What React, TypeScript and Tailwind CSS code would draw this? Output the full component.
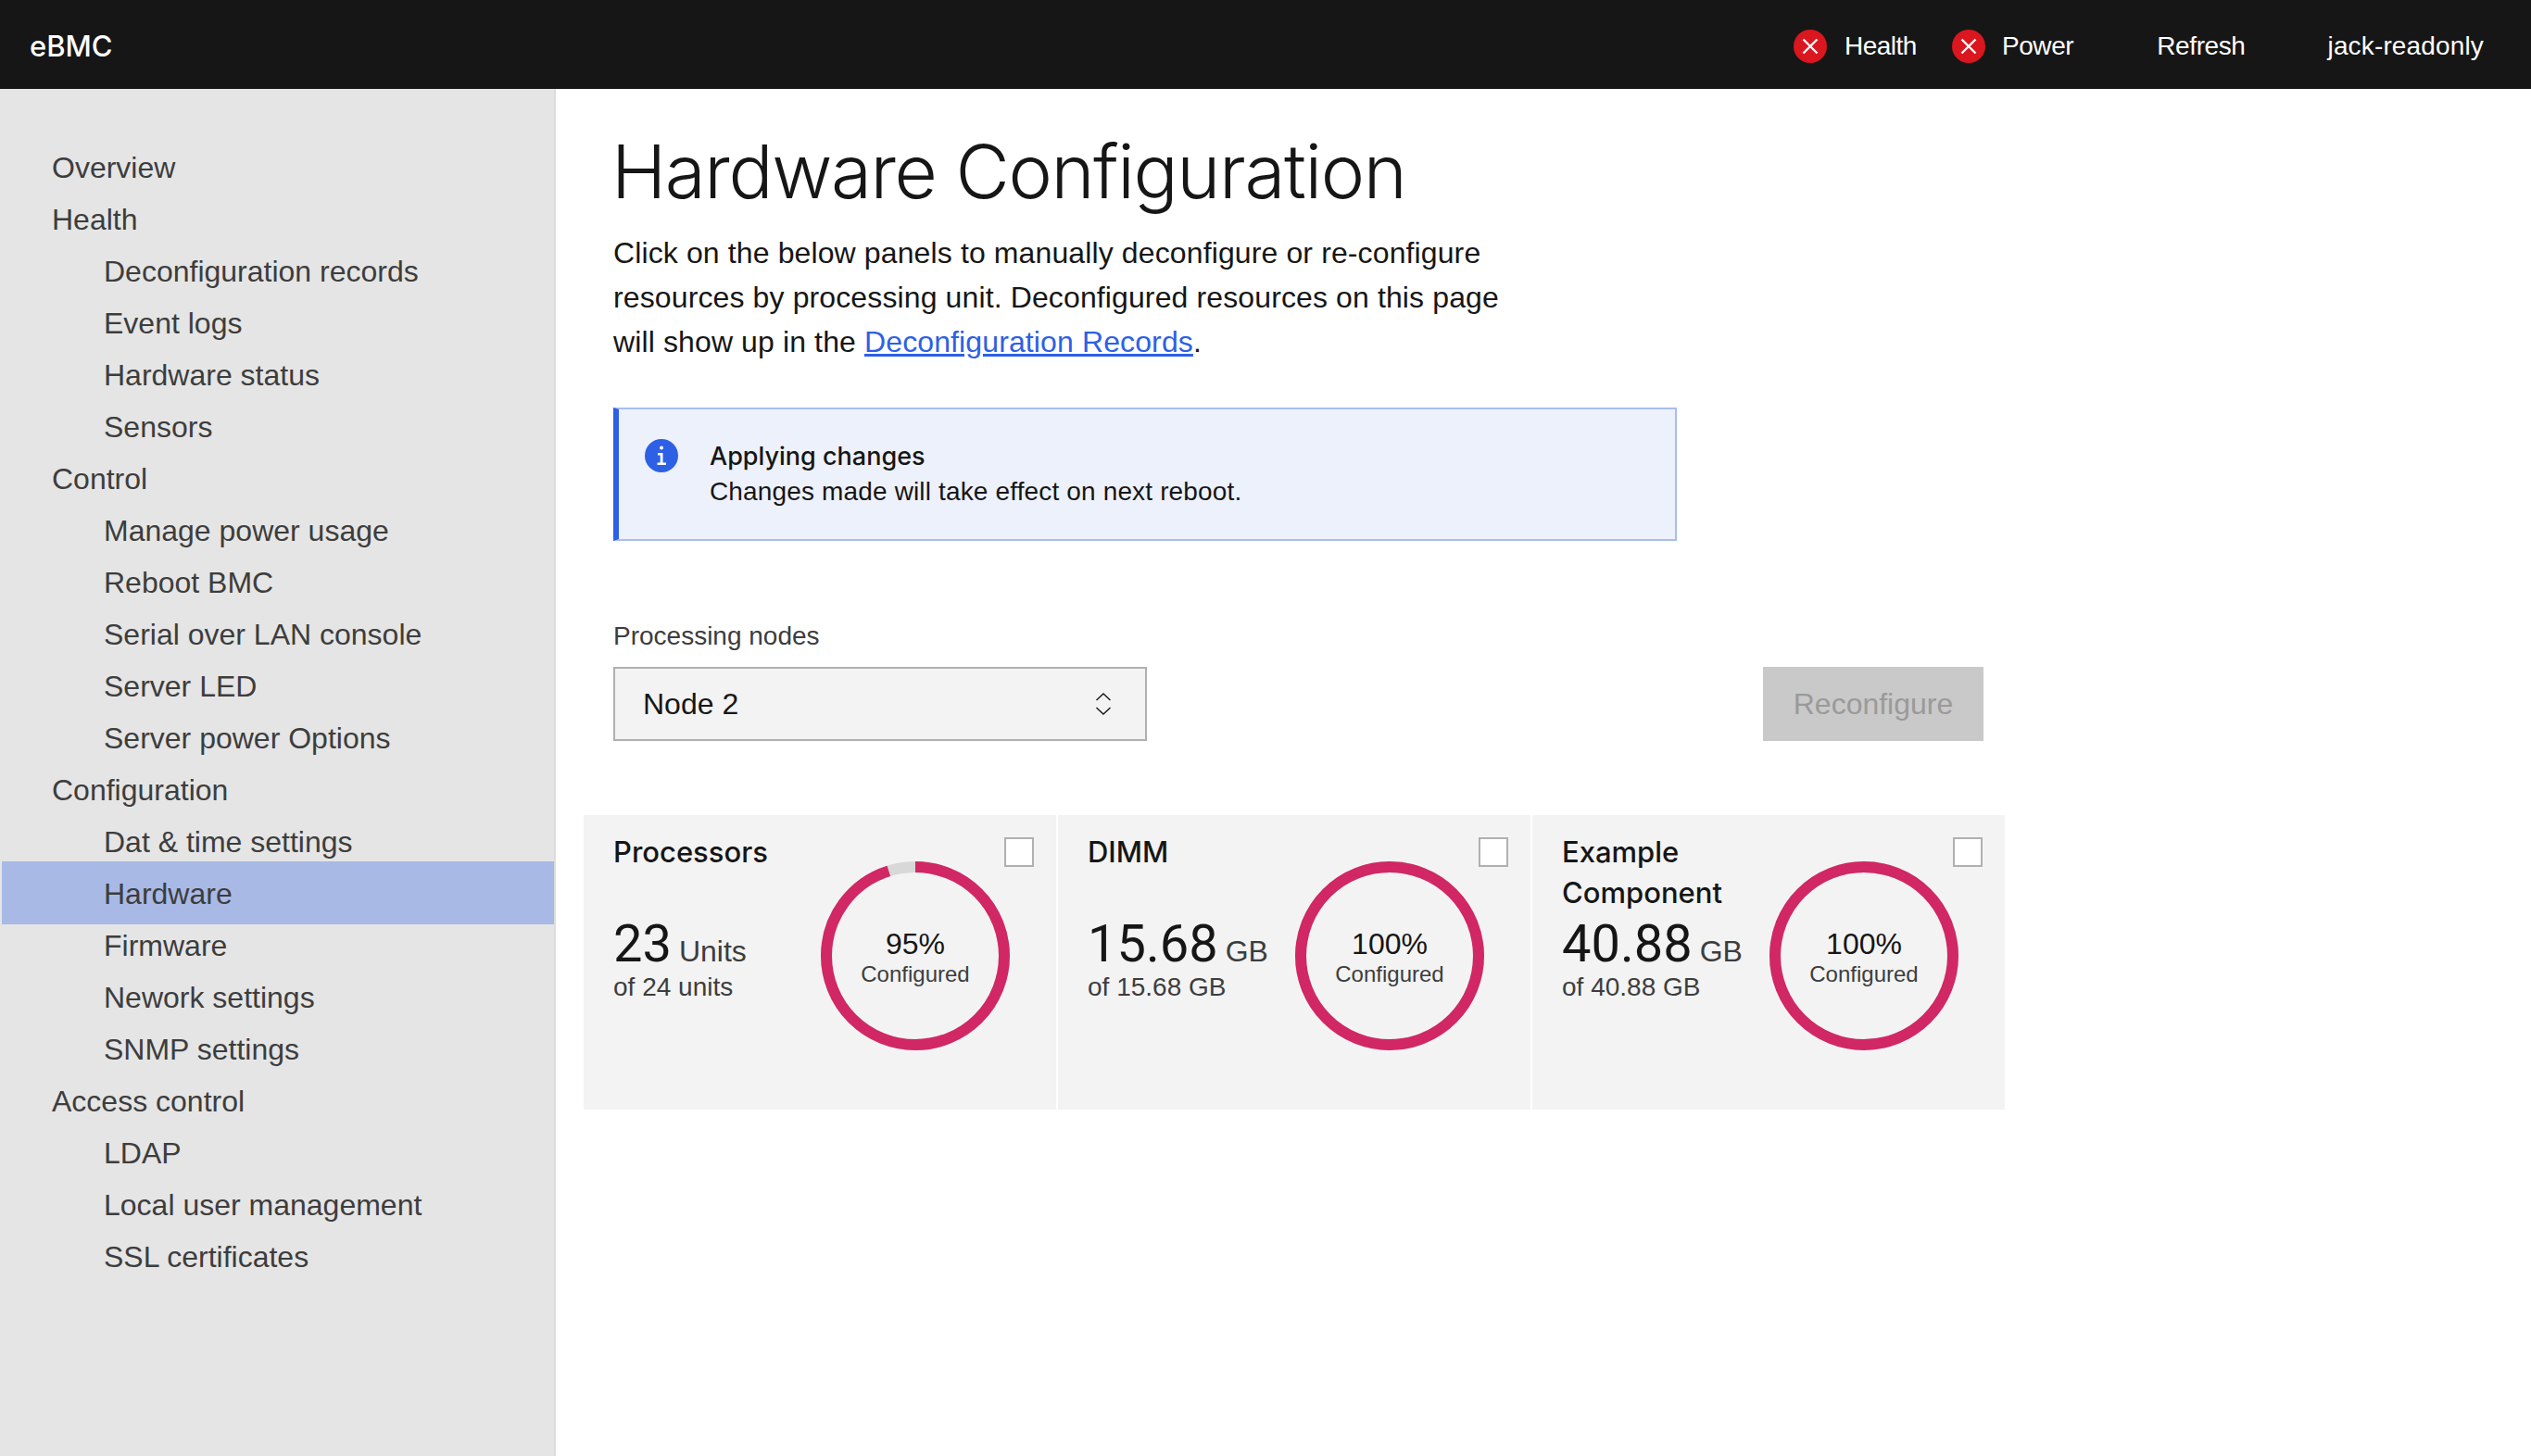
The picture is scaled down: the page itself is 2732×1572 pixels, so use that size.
import React from 'react';

const navItems = [
  { label: 'Overview' },
  { label: 'Health' },
  { label: 'Deconfiguration records', sub: true },
  { label: 'Event logs', sub: true },
  { label: 'Hardware status', sub: true },
  { label: 'Sensors', sub: true },
  { label: 'Control' },
  { label: 'Manage power usage', sub: true },
  { label: 'Reboot BMC', sub: true },
  { label: 'Serial over LAN console', sub: true },
  { label: 'Server LED', sub: true },
  { label: 'Server power Options', sub: true },
  { label: 'Configuration' },
  { label: 'Dat & time settings', sub: true },
  { label: 'Hardware', sub: true, active: true },
  { label: 'Firmware', sub: true },
  { label: 'Nework settings', sub: true },
  { label: 'SNMP settings', sub: true },
  { label: 'Access control' },
  { label: 'LDAP', sub: true },
  { label: 'Local user management', sub: true },
  { label: 'SSL certificates', sub: true },
];

const cards = [
  { title: 'Processors', value: '23', unit: 'Units', total: 'of 24 units', percent: 95 },
  { title: 'DIMM', value: '15.68', unit: 'GB', total: 'of 15.68 GB', percent: 100 },
  { title: 'Example Component', value: '40.88', unit: 'GB', total: 'of 40.88 GB', percent: 100 },
];

const ErrorIcon = () => (
  <svg width="36" height="36" viewBox="0 0 36 36" className="shrink-0">
    <circle cx="18" cy="18" r="18" fill="#da161e" />
    <path d="M10.5 10.5l15 15M25.5 10.5l-15 15" stroke="#fff" strokeWidth="2.4" fill="none" />
  </svg>
);

const InfoIcon = () => (
  <svg width="36" height="36" viewBox="0 0 36 36" className="shrink-0">
    <circle cx="18" cy="18" r="18" fill="#2d60e5" />
    <circle cx="18" cy="9.5" r="2" fill="#fff" />
    <path d="M14 15h5.5v10.5H23V28H13.5v-2.5h3.2V17.5H14z" fill="#fff" />
  </svg>
);

const Donut = ({ percent }: { percent: number }) => {
  const circumference = 2 * Math.PI * 96;
  return (
    <div className="relative mt-8 h-[204px] w-[204px] shrink-0">
      <svg width="204" height="204" viewBox="0 0 204 204" className="-rotate-90">
        <circle cx="102" cy="102" r="96" fill="none" stroke="#d8d8d8" strokeWidth="12" />
        <circle
          cx="102"
          cy="102"
          r="96"
          fill="none"
          stroke="#d12765"
          strokeWidth="12"
          strokeDasharray={`${(circumference * percent) / 100} ${circumference}`}
        />
      </svg>
      <div className="absolute inset-0 flex flex-col items-center justify-center pt-1">
        <span className="text-[32px] leading-[36px] text-[#161616]">{percent}%</span>
        <span className="text-[24px] leading-[30px] text-[#3d3d3d]">Configured</span>
      </div>
    </div>
  );
};

const Card = ({ title, value, unit, total, percent }: (typeof cards)[number]) => (
  <div className="relative flex h-[318px] w-[510px] bg-[#f3f3f3] pl-8 pt-[18px]">
    <div className="w-[224px] shrink-0">
      <div className="h-[89px] pr-4 font-['Inter',sans-serif] text-[31px] font-medium leading-[44px] text-[#161616]">{title}</div>
      <div className="flex items-baseline gap-2 whitespace-nowrap leading-[64px]">
        <span className="font-['Roboto',sans-serif] text-[56px] font-normal text-[#161616]">{value}</span>
        <span className="text-[32px] leading-none text-[#3d3d3d]">{unit}</span>
      </div>
      <div className="-mt-[3px] text-[28px] leading-[36px] text-[#3d3d3d]">{total}</div>
    </div>
    <Donut percent={percent} />
    <div className="absolute right-6 top-6 h-8 w-8 border-2 border-[#b0b0b0] bg-white" />
  </div>
);

export default function App() {
  return (
    <div className="flex h-screen w-full flex-col overflow-hidden bg-white font-['Liberation_Sans',Arial,sans-serif] text-[#161616]">
      <header className="flex h-24 shrink-0 items-center justify-between bg-[#161616] pl-8 pr-[51px] pt-1 text-white">
        <div className="font-['Inter',sans-serif] text-[31px] font-medium">eBMC</div>
        <div className="flex items-center text-[28px]">
          <ErrorIcon />
          <span className="ml-[19px] tracking-[-0.5px]">Health</span>
          <div className="ml-[38px]"><ErrorIcon /></div>
          <span className="ml-[18px] tracking-[-0.4px]">Power</span>
          <span className="ml-[90px] tracking-[-0.4px]">Refresh</span>
          <span className="ml-[89px] tracking-[0.15px]">jack-readonly</span>
        </div>
      </header>

      <div className="flex min-h-0 flex-1">
        <nav className="w-[600px] shrink-0 border-r-2 border-[#dcdcdc] bg-[#e5e5e5] pl-[2px] pt-14 text-[32px] text-[#3d3d3d]">
          {navItems.map((item) => (
            <div
              key={item.label}
              className={`flex items-center pt-[2px] ${item.sub ? 'pl-[110px]' : 'pl-[54px]'} ${
                item.active ? 'relative -my-[6px] h-[68px] bg-[#a8b9e6]' : 'h-14'
              }`}
            >
              {item.label}
            </div>
          ))}
        </nav>

        <main className="flex-1 pl-[62px] pt-[41px]">
          <h1 className="-ml-[2px] font-['Inter',sans-serif] text-[80px] font-light leading-[96px] tracking-[-1.4px] text-[#161616]">Hardware Configuration</h1>
          <p className="mt-4 w-[1000px] text-[32px] leading-[48px] tracking-[0.12px]">
            Click on the below panels to manually deconfigure or re-configure resources by processing unit. Deconfigured
            resources on this page will show up in the{' '}
            <a className="text-[#2d60e5] underline">Deconfiguration Records</a>.
          </p>

          <div className="mt-[47px] flex h-[144px] w-[1148px] items-start gap-[34px] border-2 border-l-[6px] border-[#a8bdf0] border-l-[#2d60e5] bg-[#edf1fb] pl-7 pt-8">
            <InfoIcon />
            <div className="text-[28px] leading-[38px]">
              <div className="font-['Inter',sans-serif] text-[27px] font-medium">Applying changes</div>
              <div className="tracking-[0.15px]">Changes made will take effect on next reboot.</div>
            </div>
          </div>

          <div className="mt-[87px] text-[28px] leading-8 text-[#3d3d3d]">Processing nodes</div>
          <div className="mt-[17px] flex w-[1479px] items-center justify-between">
            <div className="flex h-20 w-[576px] items-center justify-between border-2 border-[#b0b0b0] bg-[#f3f3f3] pl-[30px] pr-9 text-[32px]">
              Node 2
              <svg width="18" height="26" viewBox="0 0 18 26" fill="none" stroke="#161616" strokeWidth="1.4">
                <path d="M1.5 9L9 2l7.5 7M1.5 17L9 24l7.5-7" />
              </svg>
            </div>
            <button className="h-20 w-[238px] bg-[#c9c9c9] text-[32px] text-[#9a9a9a]">Reconfigure</button>
          </div>

          <div className="-ml-8 mt-20 flex gap-[2px]">
            {cards.map((card) => (
              <Card key={card.title} {...card} />
            ))}
          </div>
        </main>
      </div>
    </div>
  );
}
